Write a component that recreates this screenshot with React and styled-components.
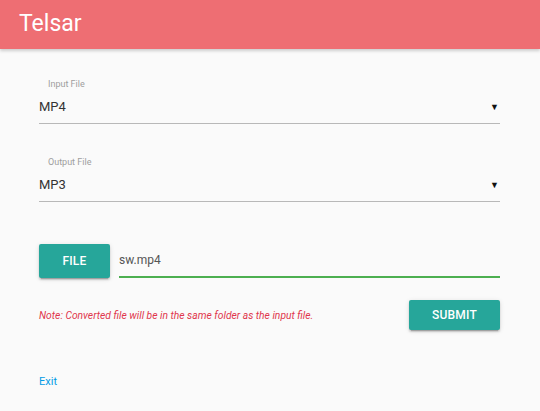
import React, { useState } from "react"
import styled, { createGlobalStyle } from "styled-components"

const GlobalStyle = createGlobalStyle`
  html, body {
    margin: 0;
    padding: 0;
    background: #fafafa;
    font-family: Roboto, "Noto Sans", sans-serif;
  }
`;

export default function App() {
    const [input] = useState("MP4");
    const [output] = useState("MP3");
    const [fileName] = useState("sw.mp4");

    return (
        <>
            <GlobalStyle />
            <Header>
                <h1>Telsar</h1>
            </Header>
            <Main>
                <Field>
                    <label>Input File</label>
                    <SelectRow>
                        <span>{input}</span>
                        <Caret>▼</Caret>
                    </SelectRow>
                </Field>

                <Field $gap={32}>
                    <label>Output File</label>
                    <SelectRow>
                        <span>{output}</span>
                        <Caret>▼</Caret>
                    </SelectRow>
                </Field>

                <FileRow>
                    <Button $width={71} $height={34}>File</Button>
                    <FileInput>{fileName}</FileInput>
                </FileRow>

                <NoteRow>
                    <Note>Note: Converted file will be in the same folder as the input file.</Note>
                    <Button $width={91} $height={30}>Submit</Button>
                </NoteRow>

                <ExitLink href="#">Exit</ExitLink>
            </Main>
        </>
    );
}

const Header = styled.header`
    height: 49px;
    background-color: #ee6e73;
    box-shadow: 0 2px 3px rgba(0, 0, 0, 0.18);
    display: flex;
    align-items: center;
    padding-left: 19px;
    h1 {
      margin: 0;
      color: #fff;
      font-size: 23px;
      font-weight: 400;
      line-height: 1;
      padding-bottom: 2px;
    }
`;

const Main = styled.main`
    width: 461px;
    margin-left: 39px;
    padding-top: 29px;
    display: flex;
    flex-direction: column;
`;

const Field = styled.div`
    margin-top: ${p => p.$gap || 0}px;
    label {
      display: block;
      height: 12px;
      line-height: 12px;
      font-size: 9px;
      color: #9e9e9e;
      padding-left: 9px;
    }
`;

const SelectRow = styled.div`
    height: 33px;
    display: flex;
    align-items: center;
    justify-content: space-between;
    border-bottom: 1px solid #b8b8b8;
    span {
      font-size: 13px;
      color: #333;
      padding-bottom: 1px;
    }
`;

const Caret = styled.i`
    font-style: normal;
    font-size: 9px;
    color: #111;
    padding-right: 1px;
`;

const FileRow = styled.div`
    margin-top: 42px;
    display: flex;
    align-items: flex-start;
    gap: 9px;
`;

const Button = styled.button`
    width: ${p => p.$width}px;
    height: ${p => p.$height}px;
    border: none;
    border-radius: 2px;
    background-color: #26a69a;
    color: #fff;
    font-family: Roboto, "Noto Sans", sans-serif;
    font-size: 12px;
    font-weight: 500;
    text-transform: uppercase;
    letter-spacing: 0.2px;
    box-shadow: 0 2px 2px rgba(0, 0, 0, 0.14), 0 1px 5px rgba(0, 0, 0, 0.12), 0 3px 1px -2px rgba(0, 0, 0, 0.2);
    cursor: pointer;
    flex-shrink: 0;
`;

const FileInput = styled.div`
    flex: 1;
    height: 33px;
    box-sizing: border-box;
    display: flex;
    align-items: center;
    font-size: 12px;
    color: #555;
    border-bottom: 1px solid #4caf50;
    box-shadow: 0 1px 0 0 #4caf50;
`;

const NoteRow = styled.div`
    margin-top: 22px;
    display: flex;
    align-items: center;
    justify-content: space-between;
`;

const Note = styled.p`
    margin: 0;
    font-size: 10.3px;
    font-style: italic;
    color: #e0364c;
`;

const ExitLink = styled.a`
    margin-top: 45px;
    align-self: flex-start;
    font-size: 11px;
    line-height: 14px;
    color: #039be5;
    text-decoration: none;
`;
